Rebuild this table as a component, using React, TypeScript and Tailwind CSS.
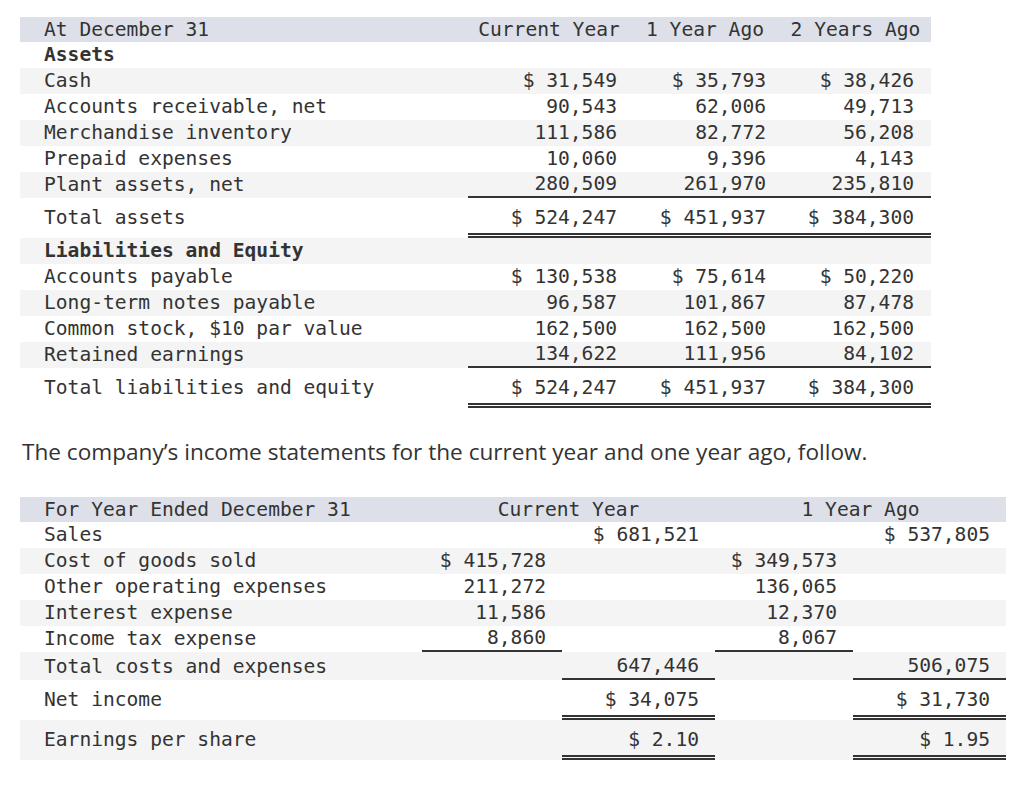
import React from 'react';

type Row = {
  label: string;
  values: string[];
  kind?: 'section' | 'underline' | 'total';
  stripe?: boolean;
};

const BALANCE: Row[] = [
  { label: 'Assets', values: ['', '', ''], kind: 'section' },
  { label: 'Cash', values: ['$ 31,549', '$ 35,793', '$ 38,426'], stripe: true },
  { label: 'Accounts receivable, net', values: ['90,543', '62,006', '49,713'] },
  { label: 'Merchandise inventory', values: ['111,586', '82,772', '56,208'], stripe: true },
  { label: 'Prepaid expenses', values: ['10,060', '9,396', '4,143'] },
  { label: 'Plant assets, net', values: ['280,509', '261,970', '235,810'], kind: 'underline', stripe: true },
  { label: 'Total assets', values: ['$ 524,247', '$ 451,937', '$ 384,300'], kind: 'total' },
  { label: 'Liabilities and Equity', values: ['', '', ''], kind: 'section', stripe: true },
  { label: 'Accounts payable', values: ['$ 130,538', '$ 75,614', '$ 50,220'] },
  { label: 'Long-term notes payable', values: ['96,587', '101,867', '87,478'], stripe: true },
  { label: 'Common stock, $10 par value', values: ['162,500', '162,500', '162,500'] },
  { label: 'Retained earnings', values: ['134,622', '111,956', '84,102'], kind: 'underline', stripe: true },
  { label: 'Total liabilities and equity', values: ['$ 524,247', '$ 451,937', '$ 384,300'], kind: 'total' },
];

// income statement: each value cell can carry its own rule under it
type Cell = { v: string; line?: 'single' | 'double' };
type IncomeRow = { label: string; cells: Cell[]; stripe?: boolean; tall?: boolean };

const INCOME: IncomeRow[] = [
  { label: 'Sales', cells: [{ v: '' }, { v: '$ 681,521' }, { v: '' }, { v: '$ 537,805' }] },
  { label: 'Cost of goods sold', cells: [{ v: '$ 415,728' }, { v: '' }, { v: '$ 349,573' }, { v: '' }], stripe: true },
  { label: 'Other operating expenses', cells: [{ v: '211,272' }, { v: '' }, { v: '136,065' }, { v: '' }] },
  { label: 'Interest expense', cells: [{ v: '11,586' }, { v: '' }, { v: '12,370' }, { v: '' }], stripe: true },
  {
    label: 'Income tax expense',
    cells: [{ v: '8,860', line: 'single' }, { v: '' }, { v: '8,067', line: 'single' }, { v: '' }],
  },
  {
    label: 'Total costs and expenses',
    cells: [{ v: '' }, { v: '647,446', line: 'single' }, { v: '' }, { v: '506,075', line: 'single' }],
    stripe: true,
  },
  {
    label: 'Net income',
    cells: [{ v: '' }, { v: '$ 34,075', line: 'double' }, { v: '' }, { v: '$ 31,730', line: 'double' }],
    tall: true,
  },
  {
    label: 'Earnings per share',
    cells: [{ v: '' }, { v: '$ 2.10', line: 'double' }, { v: '' }, { v: '$ 1.95', line: 'double' }],
    stripe: true,
    tall: true,
  },
];

const topPad = ['pr-[13px]', 'pr-[14px]', 'pr-[17px]'];
const lineClass = {
  single: 'border-b-2 border-[#333]',
  double: 'border-b-[5px] border-double border-[#333]',
};

const App: React.FC = () => {
  return (
    <div className="bg-white min-h-screen pt-[17px] pl-5 text-[#333]">
      <table className="table-fixed border-separate border-spacing-0 w-[911px] font-['DejaVu_Sans_Mono',monospace] text-[19.6px] leading-[24px]">
        <colgroup>
          <col className="w-[448px]" />
          <col className="w-[162px]" />
          <col className="w-[150px]" />
          <col className="w-[151px]" />
        </colgroup>
        <thead>
          <tr className="bg-[#dde0e9] h-[25px]">
            <th className="text-left font-normal pl-6 p-0">At December 31</th>
            <th className="text-center font-normal p-0">Current Year</th>
            <th className="text-center font-normal p-0">1 Year Ago</th>
            <th className="text-center font-normal p-0">2 Years Ago</th>
          </tr>
        </thead>
        <tbody>
          {BALANCE.map((row) => (
            <tr
              key={row.label}
              className={`${row.stripe ? 'bg-[#f4f4f4]' : ''} ${row.kind === 'total' ? 'h-[40px]' : 'h-[26px]'}`}
            >
              <td className={`pl-6 p-0 ${row.kind === 'section' ? 'font-bold' : ''}`}>{row.label}</td>
              {row.values.map((v, i) => (
                <td
                  key={i}
                  className={`text-right p-0 ${topPad[i]} ${
                    row.kind === 'underline' ? lineClass.single : row.kind === 'total' ? `${lineClass.double} pt-[4px]` : ''
                  }`}
                >
                  {v}
                </td>
              ))}
            </tr>
          ))}
        </tbody>
      </table>

      <p className="ml-[2px] mt-[28px] font-['Open_Sans',sans-serif] text-[22.6px] leading-[32px] text-[#333]">
        The company’s income statements for the current year and one year ago, follow.
      </p>

      <table className="mt-[29px] table-fixed border-separate border-spacing-0 w-[986px] font-['DejaVu_Sans_Mono',monospace] text-[19.6px] leading-[24px]">
        <colgroup>
          <col className="w-[402px]" />
          <col className="w-[140px]" />
          <col className="w-[153px]" />
          <col className="w-[138px]" />
          <col className="w-[153px]" />
        </colgroup>
        <thead>
          <tr className="bg-[#dde0e9] h-[25px]">
            <th className="text-left font-normal pl-6 p-0">For Year Ended December 31</th>
            <th colSpan={2} className="text-center font-normal p-0">Current Year</th>
            <th colSpan={2} className="text-center font-normal p-0">1 Year Ago</th>
          </tr>
        </thead>
        <tbody>
          {INCOME.map((row) => {
            const isTotal = row.label.startsWith('Total');
            return (
              <tr
                key={row.label}
                className={`${row.stripe ? 'bg-[#f4f4f4]' : ''} ${
                  row.tall ? 'h-[40px]' : isTotal ? 'h-[28px]' : 'h-[26px]'
                }`}
              >
                <td className={`pl-6 p-0 ${isTotal ? 'pt-[2px]' : ''}`}>{row.label}</td>
                {row.cells.map((c, i) => (
                  <td
                    key={i}
                    className={`text-right p-0 pr-4 ${c.line ? lineClass[c.line] : ''} ${
                      row.tall && c.line ? 'pt-[4px]' : isTotal ? 'pt-[2px]' : ''
                    }`}
                  >
                    {c.v}
                  </td>
                ))}
              </tr>
            );
          })}
        </tbody>
      </table>
    </div>
  );
};

export default App;
